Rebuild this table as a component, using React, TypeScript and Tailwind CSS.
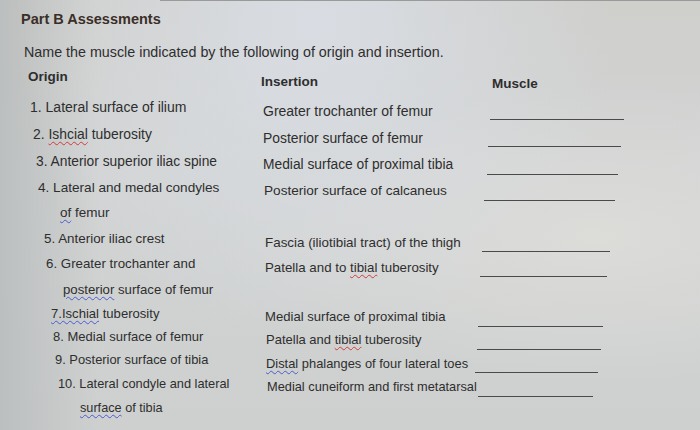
import React from "react";

type RowProps = {
  h: string;
  ow: string;
  ox: string;
  iw: string;
  lw: string;
  imt: string;
  fs: string;
  origin?: React.ReactNode;
  insertion?: React.ReactNode;
  line?: boolean;
};

function Row({ h, ow, ox, iw, lw, imt, fs, origin, insertion, line }: RowProps) {
  return (
    <div className={`flex shrink-0 ${h}`}>
      <div className={`shrink-0 ${ow} ${ox} ${fs} leading-4 whitespace-nowrap`}>{origin}</div>
      <div className={`shrink-0 ${iw} ${imt} ${fs} leading-4 whitespace-nowrap`}>{insertion}</div>
      {line ? <div className={`shrink-0 mt-[20px] h-px bg-[#4a4a4a] ${lw}`} /> : null}
    </div>
  );
}

const red = "underline decoration-wavy decoration-[#d23a3a] underline-offset-2 decoration-1";
const blue = "underline decoration-wavy decoration-[#4a5bd0] underline-offset-2 decoration-1";

export default function App() {
  return (
    <div
      className="w-[700px] h-[430px] overflow-hidden relative flex flex-col text-[#2e2e2e] bg-[#d2d4d4] bg-[radial-gradient(ellipse_at_45%_5%,#d9dde3_0%,transparent_55%),radial-gradient(ellipse_at_85%_55%,#dcdcd9_0%,transparent_45%),linear-gradient(to_right,#bcbfbf_0%,transparent_14%),linear-gradient(to_bottom,#cfcfcc_0%,#d2d4d4_40%,#cdd0cf_100%)]"
      style={{ fontFamily: '"Liberation Sans", Arial, sans-serif' }}
    >
      <div className="h-px bg-[#9a9a9a] ml-[160px] shrink-0" />
      <div className="pl-[21px] pt-[10px] h-[43px] shrink-0 text-[14.5px] leading-4 font-bold text-[#3a2f28]">Part B Assessments</div>
      <div className="pl-[24px] h-[25px] shrink-0 text-[14.3px] leading-4">Name the muscle indicated by the following of origin and insertion.</div>
      <div className="flex shrink-0 h-[22px] text-[13.5px] leading-4 font-bold">
        <div className="w-[261px] pl-[28px] shrink-0">Origin</div>
        <div className="w-[231px] pt-[5px] shrink-0">Insertion</div>
        <div className="pt-[7px] shrink-0">Muscle</div>
      </div>
      <div className="h-[8px] shrink-0" />
      <Row fs="text-[14px]" h="h-[27px]" ow="w-[263px]" ox="pl-[30px]" iw="w-[227px]" lw="w-[134px]" imt="mt-[4px]" origin="1. Lateral surface of ilium" insertion="Greater trochanter of femur" line />
      <Row fs="text-[13.9px]" h="h-[28px]" ow="w-[263px]" ox="pl-[33px]" iw="w-[225px]" lw="w-[133px]" imt="mt-[4px]" origin={<>2. <span className={red}>Ishcial</span> tuberosity</>} insertion="Posterior surface of femur" line />
      <Row fs="text-[13.8px]" h="h-[26px]" ow="w-[263px]" ox="pl-[36px]" iw="w-[224px]" lw="w-[131px]" imt="mt-[3px]" origin="3. Anterior superior iliac spine" insertion="Medial surface of proximal tibia" line />
      <Row fs="text-[13.6px]" h="h-[25px]" ow="w-[264px]" ox="pl-[38px]" iw="w-[220px]" lw="w-[131px]" imt="mt-[3px]" origin="4. Lateral and medal condyles" insertion="Posterior surface of calcaneus" line />
      <Row fs="text-[13.5px]" h="h-[26px]" ow="w-[264px]" ox="pl-[60px]" iw="w-[220px]" lw="w-[0px]" imt="mt-[3px]" origin={<><span className={blue}>of</span> femur</>} />
      <Row fs="text-[13.4px]" h="h-[25px]" ow="w-[265px]" ox="pl-[44px]" iw="w-[217px]" lw="w-[128px]" imt="mt-[4px]" origin="5. Anterior iliac crest" insertion="Fascia (iliotibial tract) of the thigh" line />
      <Row fs="text-[13.3px]" h="h-[26px]" ow="w-[265px]" ox="pl-[46px]" iw="w-[215px]" lw="w-[127px]" imt="mt-[4px]" origin="6. Greater trochanter and" insertion={<>Patella and to <span className={red}>tibial</span> tuberosity</>} line />
      <Row fs="text-[13.2px]" h="h-[24px]" ow="w-[265px]" ox="pl-[63px]" iw="w-[213px]" lw="w-[0px]" imt="mt-[3px]" origin={<><span className={blue}>posterior</span> surface of femur</>} />
      <Row fs="text-[13.1px]" h="h-[23px]" ow="w-[265px]" ox="pl-[51px]" iw="w-[213px]" lw="w-[125px]" imt="mt-[3px]" origin={<><span className={blue}>7.Ischial</span> tuberosity</>} insertion="Medial surface of proximal tibia" line />
      <Row fs="text-[13px]" h="h-[23px]" ow="w-[266px]" ox="pl-[53px]" iw="w-[211px]" lw="w-[124px]" imt="mt-[3px]" origin="8. Medial surface of femur" insertion={<>Patella and <span className={red}>tibial</span> tuberosity</>} line />
      <Row fs="text-[12.9px]" h="h-[24px]" ow="w-[266px]" ox="pl-[55px]" iw="w-[209px]" lw="w-[123px]" imt="mt-[4px]" origin="9. Posterior surface of tibia" insertion={<><span className={blue}>Distal</span> phalanges of four lateral toes</>} line />
      <Row fs="text-[12.8px]" h="h-[24px]" ow="w-[267px]" ox="pl-[58px]" iw="w-[211px]" lw="w-[115px]" imt="mt-[3px]" origin="10. Lateral condyle and lateral" insertion="Medial cuneiform and first metatarsal" line />
      <Row fs="text-[12.7px]" h="h-[20px]" ow="w-[267px]" ox="pl-[80px]" iw="w-[211px]" lw="w-[0px]" imt="mt-[3px]" origin={<><span className={blue}>surface</span> of tibia</>} />
    </div>
  );
}
